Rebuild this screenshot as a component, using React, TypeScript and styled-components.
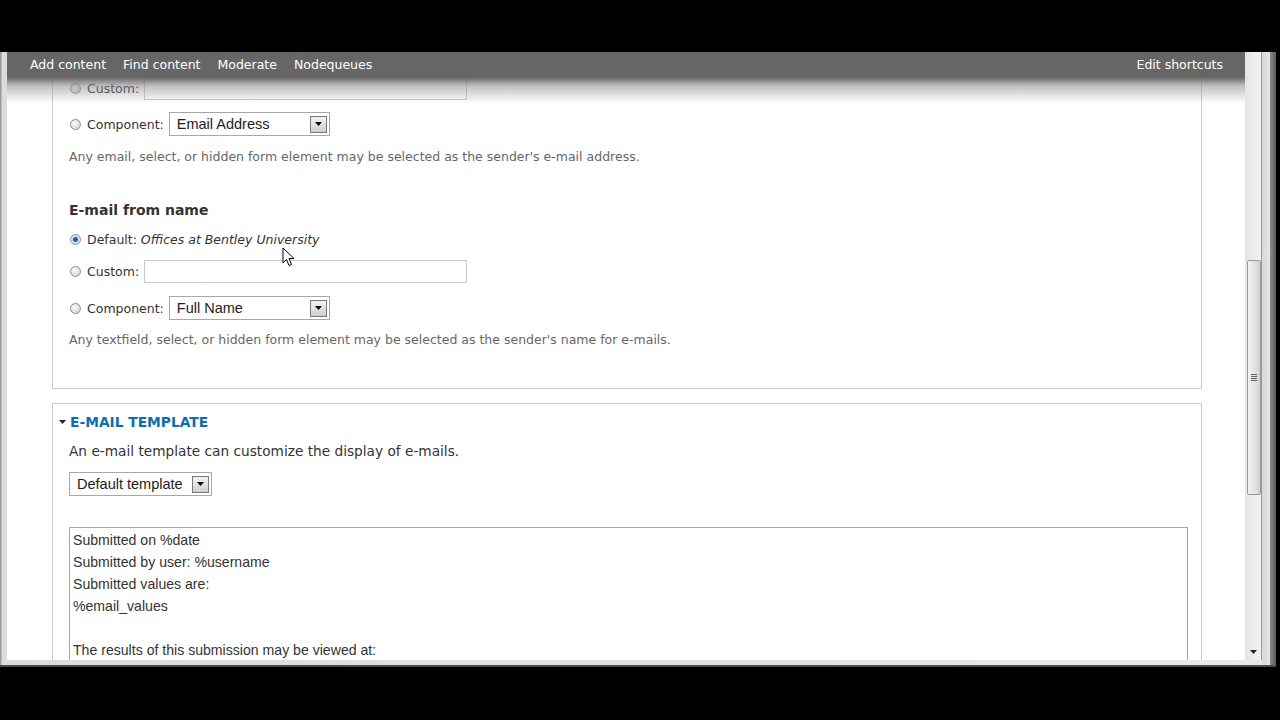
import styled, { createGlobalStyle } from 'styled-components';

const GlobalStyle = createGlobalStyle`
  html, body {
    margin: 0;
    padding: 0;
    background: #000;
  }
`;

type IRowProps = {
  $top: number;
  $height: number;
};

const toolbarLinks = ['Add content', 'Find content', 'Moderate', 'Nodequeues'];

const templateLines = [
  'Submitted on %date',
  'Submitted by user: %username',
  'Submitted values are:',
  '%email_values',
  '',
  'The results of this submission may be viewed at:',
];

const SelectBox = ({ value, width }: { value: string; width: number }) => (
  <Select style={{ width }}>
    <SelectValue>{value}</SelectValue>
    <SelectArrow>
      <svg width="7" height="4" viewBox="0 0 7 4">
        <path d="M0 0h7L3.5 4z" fill="#000" />
      </svg>
    </SelectArrow>
  </Select>
);

const App = (): JSX.Element => {
  return (
    <Screen>
      <GlobalStyle />
      <Window>
        <Viewport>
          <Content>
            <Fieldset $open>
              <Row $top={25} $height={23}>
                <Radio />
                <Label>Custom:</Label>
                <TextInput />
              </Row>
              <Row $top={12} $height={24}>
                <Radio />
                <Label>Component:</Label>
                <SelectBox value="Email Address" width={161} />
              </Row>
              <Help $top={12}>Any email, select, or hidden form element may be selected as the sender's e-mail address.</Help>

              <SubHeading>E-mail from name</SubHeading>
              <Row $top={11} $height={18}>
                <Radio $checked />
                <Label>
                  Default: <em>Offices at Bentley University</em>
                </Label>
              </Row>
              <Row $top={12} $height={23}>
                <Radio />
                <Label>Custom:</Label>
                <TextInput />
              </Row>
              <Row $top={13} $height={24}>
                <Radio />
                <Label>Component:</Label>
                <SelectBox value="Full Name" width={161} />
              </Row>
              <Help $top={11}>Any textfield, select, or hidden form element may be selected as the sender's name for e-mails.</Help>
            </Fieldset>

            <Fieldset>
              <Legend>
                <svg width="7" height="4" viewBox="0 0 7 4">
                  <path d="M0 0h7L3.5 4z" fill="#222" />
                </svg>
                E-MAIL TEMPLATE
              </Legend>
              <Description>An e-mail template can customize the display of e-mails.</Description>
              <Row $top={12} $height={24}>
                <SelectBox value="Default template" width={143} />
              </Row>
              <TemplateArea>
                {templateLines.map((line, i) => (
                  <TemplateLine key={i}>{line || '\u00a0'}</TemplateLine>
                ))}
              </TemplateArea>
            </Fieldset>
          </Content>

          <Toolbar>
            <ToolbarLinks>
              {toolbarLinks.map(link => (
                <ToolbarLink key={link}>{link}</ToolbarLink>
              ))}
            </ToolbarLinks>
            <ToolbarLink>Edit shortcuts</ToolbarLink>
            <ToolbarShadow />
          </Toolbar>

          <Cursor width="13" height="21" viewBox="0 0 13 21">
            <path
              d="M1 1v15l3.5-3.5 2.5 6 2.5-1-2.5-6h5z"
              fill="#fff"
              stroke="#000"
              strokeWidth="1"
              strokeLinejoin="round"
            />
          </Cursor>
        </Viewport>

        <Scrollbar>
          <Thumb>
            <Grip />
          </Thumb>
          <ScrollArrow>
            <svg width="7" height="4" viewBox="0 0 7 4">
              <path d="M0 0h7L3.5 4z" fill="#222" />
            </svg>
          </ScrollArrow>
        </Scrollbar>
        <RightFrame />
      </Window>
    </Screen>
  );
};

export default App;

const Screen = styled.div`
  width: 1280px;
  height: 720px;
  padding-top: 52px;
  box-sizing: border-box;
  background: #000;
  overflow: hidden;
`;

const Window = styled.div`
  display: flex;
  width: 1276px;
  height: 615px;
  box-sizing: border-box;
  padding: 0 0 5px 7px;
  background: linear-gradient(90deg, #9a9a9a 0, #9a9a9a 1px, #dcdcdc 2px, #e8e8e8 100%);
  border-bottom: 2px solid #4a4a4a;
`;

const Viewport = styled.div`
  position: relative;
  width: 1238px;
  height: 608px;
  overflow: hidden;
  background: #fff;
  font-family: 'DejaVu Sans', Verdana, sans-serif;
  color: #333;
`;

const Content = styled.div`
  padding: 0 43px 0 45px;
`;

const Fieldset = styled.div<{ $open?: boolean }>`
  border: 1px solid #ccc;
  border-top: ${props => (props.$open ? 'none' : '1px solid #ccc')};
  margin-top: ${props => (props.$open ? '0' : '14px')};
  padding: ${props => (props.$open ? '0 16px 39px' : '9px 14px 40px 16px')};
  display: flex;
  flex-direction: column;
  align-items: flex-start;
`;

const Row = styled.div<IRowProps>`
  display: flex;
  align-items: center;
  margin-top: ${props => props.$top}px;
  height: ${props => props.$height}px;
`;

const Radio = styled.span<{ $checked?: boolean }>`
  width: 11px;
  height: 11px;
  margin: 0 6px 0 1px;
  box-sizing: border-box;
  border-radius: 50%;
  border: 1px solid #8e8e8e;
  background: ${props =>
    props.$checked
      ? 'radial-gradient(circle, #1b4f8a 0, #2f6fb5 2px, #c9d8e8 3px, #eeeeee 5px)'
      : 'radial-gradient(circle at 40% 35%, #fafafa 0, #dedede 60%, #c4c4c4 100%)'};
`;

const Label = styled.span`
  font-size: 12.5px;
  color: #333;
  margin-right: 5px;
  white-space: nowrap;

  em {
    font-style: italic;
  }
`;

const TextInput = styled.div`
  width: 323px;
  height: 23px;
  box-sizing: border-box;
  border: 1px solid #c8c8c8;
  background: #fff;
`;

const Select = styled.div`
  height: 24px;
  box-sizing: border-box;
  display: flex;
  align-items: center;
  justify-content: space-between;
  border: 1px solid #a8a8a8;
  padding: 0 2px 0 7px;
  background: #fff;
`;

const SelectValue = styled.span`
  font-family: 'Liberation Sans', Arial, sans-serif;
  font-size: 14.5px;
  color: #222;
  white-space: nowrap;
`;

const SelectArrow = styled.span`
  width: 17px;
  height: 17px;
  box-sizing: border-box;
  display: flex;
  align-items: center;
  justify-content: center;
  border: 1px solid #7a7a7a;
  background: linear-gradient(#f2f2f2, #cfcfcf);
  margin-left: 8px;
`;

const Help = styled.div<{ $top: number }>`
  margin-top: ${props => props.$top}px;
  height: 18px;
  line-height: 18px;
  font-size: 12.5px;
  color: #666;
  white-space: nowrap;
`;

const SubHeading = styled.div`
  margin-top: 35px;
  height: 18px;
  line-height: 18px;
  font-size: 14px;
  font-weight: bold;
  color: #333;
`;

const Legend = styled.div`
  display: flex;
  align-items: center;
  gap: 4px;
  height: 18px;
  margin-left: -10px;
  font-size: 13.8px;
  font-weight: bold;
  color: #0a6fae;
`;

const Description = styled.div`
  margin-top: 11px;
  height: 18px;
  line-height: 18px;
  font-size: 13.7px;
  color: #333;
`;

const TemplateArea = styled.div`
  margin-top: 31px;
  width: 1119px;
  box-sizing: border-box;
  border: 1px solid #a8a8a8;
  padding: 1px 3px;
`;

const TemplateLine = styled.div`
  font-family: 'Liberation Sans', Arial, sans-serif;
  font-size: 14.1px;
  line-height: 22px;
  color: #333;
  white-space: pre;
`;

const Toolbar = styled.div`
  position: absolute;
  top: 0;
  left: 0;
  right: 0;
  height: 25px;
  display: flex;
  align-items: center;
  justify-content: space-between;
  padding: 0 14px 0 15px;
  background: #666;
`;

const ToolbarLinks = styled.div`
  display: flex;
`;

const ToolbarLink = styled.span`
  padding: 0 8px;
  font-size: 12.5px;
  color: #fff;
  white-space: nowrap;

  & + & {
    margin-left: 1px;
  }
`;

const ToolbarShadow = styled.div`
  position: absolute;
  top: 25px;
  left: 0;
  right: 0;
  height: 26px;
  background: linear-gradient(rgba(96, 96, 96, 0.97), rgba(140, 140, 140, 0.55) 35%, rgba(255, 255, 255, 0));
  pointer-events: none;
`;

const Cursor = styled.svg`
  position: absolute;
  left: 275px;
  top: 195px;
`;

const Scrollbar = styled.div`
  position: relative;
  width: 17px;
  height: 608px;
  box-sizing: border-box;
  background: linear-gradient(90deg, #e4e4e4, #f2f2f2);
  border-right: 1px solid #9a9a9a;
`;

const Thumb = styled.div`
  position: absolute;
  left: 2px;
  top: 208px;
  width: 14px;
  height: 235px;
  box-sizing: border-box;
  border: 1px solid #9a9a9a;
  border-radius: 2px;
  background: linear-gradient(90deg, #f4f4f4, #e2e2e2 60%, #d0d0d0);
  display: flex;
  align-items: center;
  justify-content: center;
`;

const Grip = styled.div`
  width: 6px;
  height: 7px;
  background: repeating-linear-gradient(#666 0, #666 1px, transparent 1px, transparent 2px);
`;

const ScrollArrow = styled.div`
  position: absolute;
  bottom: 6px;
  left: 5px;
  display: flex;
`;

const RightFrame = styled.div`
  width: 14px;
  height: 613px;
  box-sizing: border-box;
  background: linear-gradient(90deg, #d8d8d8 0, #e6e6e6 55%, #8a8a8a 60%, #5a5a5a 100%);
`;
